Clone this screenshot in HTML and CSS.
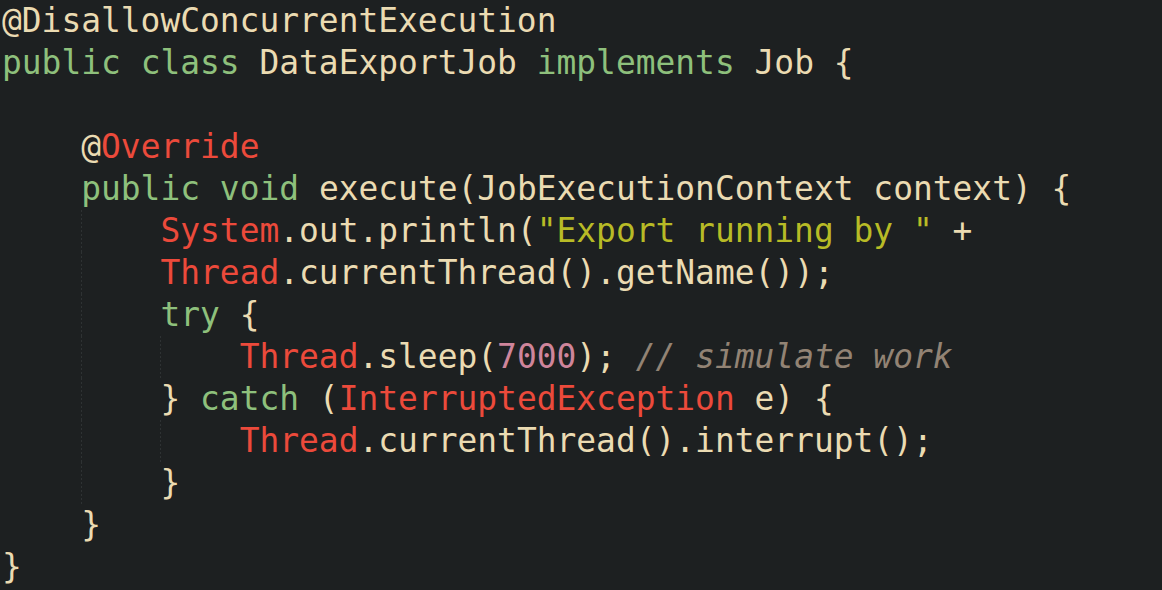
FILE: index.html
```html
<!DOCTYPE html>
<html>
<head>
<meta charset="utf-8">
<link rel="stylesheet" href="styles.css">
</head>
<body>
<pre class="code"><div class="ln"><span class="fg">@DisallowConcurrentExecution</span></div><div class="ln"><span class="kw">public</span> <span class="kw">class</span> <span class="fg">DataExportJob</span> <span class="kw">implements</span> <span class="fg">Job {</span></div><div class="ln"> </div><div class="ln">    <span class="fg">@</span><span class="ty">Override</span></div><div class="ln">    <span class="kw">public</span> <span class="kw">void</span> <span class="fg">execute(JobExecutionContext context) {</span></div><div class="ln">    <span class="g">    </span><span class="ty">System</span><span class="fg">.out.println(</span><span class="str">"Export running by "</span><span class="fg"> +</span></div><div class="ln">    <span class="g">    </span><span class="ty">Thread</span><span class="fg">.currentThread().getName());</span></div><div class="ln">    <span class="g">    </span><span class="kw">try</span><span class="fg"> {</span></div><div class="ln">    <span class="g">    </span><span class="g">    </span><span class="ty">Thread</span><span class="fg">.sleep(</span><span class="num">7000</span><span class="fg">);</span> <span class="cm">// simulate work</span></div><div class="ln">    <span class="g">    </span><span class="fg">} </span><span class="kw">catch</span><span class="fg"> (</span><span class="ty">InterruptedException</span><span class="fg"> e) {</span></div><div class="ln">    <span class="g">    </span><span class="g">    </span><span class="ty">Thread</span><span class="fg">.currentThread().interrupt();</span></div><div class="ln">    <span class="g">    </span><span class="fg">}</span></div><div class="ln">    <span class="fg">}</span></div><div class="ln"><span class="fg">}</span></div></pre>
</body>
</html>
```

FILE: styles.css
```css
html, body {
  margin: 0;
  padding: 0;
  background: #1d2021;
  width: 1162px;
  height: 590px;
  overflow: hidden;
}

.code {
  margin: 0;
  padding: 0 0 0 2px;
  font-family: "DejaVu Sans Mono", "Liberation Mono", monospace;
  font-size: 32.9px;
  line-height: 42px;
  color: #ebdbb2;
  white-space: pre;
}

.ln {
  height: 42px;
}

.g {
  display: inline-block;
  height: 42px;
  vertical-align: top;
  background-image: linear-gradient(to bottom, #2e3233 50%, transparent 50%);
  background-size: 1px 4px;
  background-repeat: repeat-y;
  background-position: 0 0;
}

.fg { color: #ebdbb2; }
.kw { color: #8ec07c; }
.ty { color: #ec4a3b; }
.str { color: #b8bb26; }
.num { color: #cf859b; }
.cm { color: #928374; font-style: italic; }
```
